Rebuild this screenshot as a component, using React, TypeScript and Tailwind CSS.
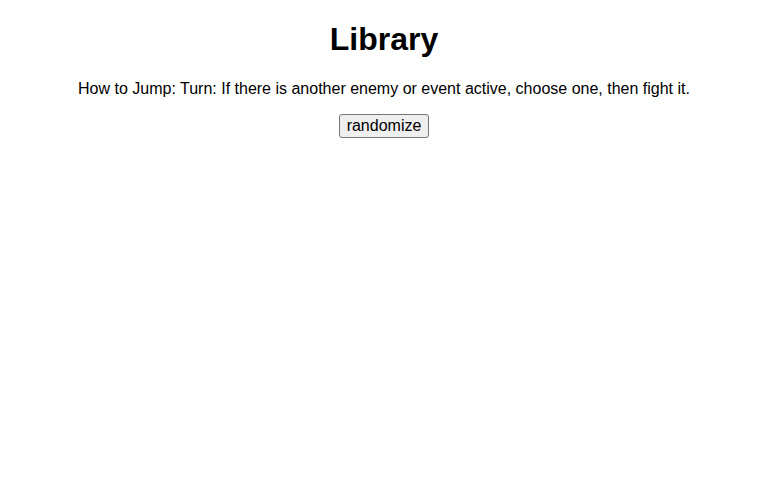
import React, { FC } from "react";

interface LibraryCardProps {
  title: string;
  text: string;
  onRandomize: () => void;
}

const entries = [
  "How to Jump: Turn: If there is another enemy or event active, choose one, then fight it.",
];

const LibraryCard: FC<LibraryCardProps> = ({ title, text, onRandomize }) => {
  return (
    <main className="flex flex-col items-center px-2 pt-5 text-center font-['Liberation_Sans',Arial,sans-serif] text-base text-black">
      <h1 className="text-[32px] leading-[38px] font-bold">{title}</h1>
      <p className="mt-5 leading-[22px]">{text}</p>
      <button
        type="button"
        onClick={onRandomize}
        className="mt-3.5 rounded-[3px] border border-[#767676] bg-[#efefef] px-[7px] py-px leading-5 hover:bg-[#e5e5e5]"
      >
        randomize
      </button>
    </main>
  );
};

const App = () => {
  const [index, setIndex] = React.useState(0);

  const randomize = () => {
    setIndex(Math.floor(Math.random() * entries.length));
  };

  return (
    <LibraryCard
      title="Library"
      text={entries[index]}
      onRandomize={randomize}
    />
  );
};

export default App;
